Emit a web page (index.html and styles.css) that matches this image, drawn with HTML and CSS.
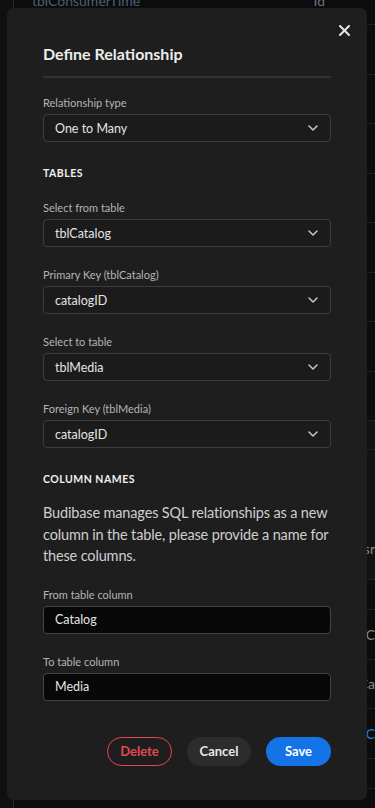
FILE: index.html
```html
<!DOCTYPE html>
<html lang="en">
<head>
    <meta charset="UTF-8">
    <meta name="viewport" content="width=device-width, initial-scale=1.0">
    <title>Define Relationship</title>
    <link rel="stylesheet" href="styles.css">
</head>
<body>

<div class="backdrop">
    <div class="side"></div>
    <div class="grid">
        <div class="row first"><span class="cell name">tblConsumerTime</span><span class="cell type">Id</span></div>
        <div class="row"></div>
        <div class="row"></div>
        <div class="row"></div>
        <div class="row"></div>
        <div class="row"></div>
        <div class="row"></div>
        <div class="row"></div>
        <div class="row"></div>
        <div class="row band"></div>
        <div class="row tall"><span class="cell frag">sr</span></div>
        <div class="row short"></div>
        <div class="row"><span class="cell frag">o C</span></div>
        <div class="row"><span class="cell frag">Ca</span></div>
        <div class="row"><span class="cell frag">o <b class="blue">C</b></span></div>
        <div class="row short"></div>
        <div class="row"></div>
    </div>
</div>

<div class="modal">
    <button class="close" aria-label="Close">
        <svg width="11" height="11" viewBox="0 0 11 11"><path d="M1 1 L10 10 M10 1 L1 10" stroke="#e6e6e6" stroke-width="2" stroke-linecap="round"/></svg>
    </button>

    <h2>Define Relationship</h2>
    <div class="divider"></div>

    <div class="field">
        <label>Relationship type</label>
        <div class="select">One to Many <span class="chev"></span></div>
    </div>

    <h4>TABLES</h4>

    <div class="field">
        <label>Select from table</label>
        <div class="select">tblCatalog <span class="chev"></span></div>
    </div>
    <div class="field">
        <label>Primary Key (tblCatalog)</label>
        <div class="select">catalogID <span class="chev"></span></div>
    </div>
    <div class="field">
        <label>Select to table</label>
        <div class="select">tblMedia <span class="chev"></span></div>
    </div>
    <div class="field">
        <label>Foreign Key (tblMedia)</label>
        <div class="select">catalogID <span class="chev"></span></div>
    </div>

    <h4 class="tight">COLUMN NAMES</h4>
    <p class="desc">Budibase manages SQL relationships as a new column in the table, please provide a name for these columns.</p>

    <div class="field">
        <label>From table column</label>
        <div class="input">Catalog</div>
    </div>
    <div class="field">
        <label>To table column</label>
        <div class="input">Media</div>
    </div>

    <div class="actions">
        <button class="btn delete">Delete</button>
        <button class="btn cancel">Cancel</button>
        <button class="btn save">Save</button>
    </div>
</div>

<script>
    // chevrons drawn once, same for every select
    document.querySelectorAll('.chev').forEach(function (el) {
        el.innerHTML = '<svg width="10" height="6" viewBox="0 0 10 6"><path d="M1 1 L5 5 L9 1" fill="none" stroke="#c8c8c8" stroke-width="1.5" stroke-linecap="round" stroke-linejoin="round"/></svg>';
    });
</script>

</body>
</html>
```

FILE: styles.css
```css
body {
    margin: 0;
    background: #0c0c0c;
    font-family: 'Lato', 'Noto Sans', sans-serif;
    height: 808px;
    overflow: hidden;
}
.backdrop {
    display: flex;
    height: 808px;
}
.side {
    width: 13px;
    background: #101010;
    border-right: 1px solid #2a2a2a;
}
.grid {
    flex: 1;
    margin-top: -24px;
}
.row {
    height: 49.5px;
    box-sizing: border-box;
    border-bottom: 1px solid #222;
    display: flex;
    align-items: center;
}
.row.first { height: 49px; align-items: flex-start; padding-top: 16px; }
.row.band { height: 29px; background: #131313; }
.row.tall { height: 130px; background: #131313; align-items: flex-end; padding-bottom: 22px; }
.row.short { height: 30px; }
.cell {
    font-size: 14px;
    color: #4e5c7a;
}
.name { margin-left: 18px; }
.type { margin-left: auto; margin-right: 50px; color: #6a6f86; }
.frag {
    margin-left: auto;
    color: #8a8a8a;
}
.blue { color: #2680eb; font-weight: normal; }

.modal {
    position: absolute;
    top: 8px;
    left: 7px;
    width: 360px;
    height: 792px;
    box-sizing: border-box;
    background: #1e1e1e;
    border-radius: 7px;
    padding: 36px 36px 0 36px;
}
.close {
    position: absolute;
    top: 17px;
    right: 17px;
    background: none;
    border: none;
    padding: 0;
    width: 11px;
    height: 11px;
    cursor: pointer;
}
.close svg { display: block; }
h2 {
    margin: 0;
    font-size: 16px;
    font-weight: bold;
    color: #ececec;
    line-height: 20px;
}
.divider {
    height: 2px;
    background: #333;
    margin: 12px 0 18px;
}
.field { margin-bottom: 21px; }
label {
    display: block;
    font-size: 11px;
    color: #b4b4b4;
    line-height: 14px;
    margin-bottom: 4px;
}
.select, .input {
    height: 28px;
    box-sizing: border-box;
    border: 1px solid #3d3d3d;
    border-radius: 4px;
    background: #1b1b1b;
    display: flex;
    align-items: center;
    padding: 0 11px;
    font-size: 12.5px;
    color: #e4e4e4;
}
.input { background: #080808; border-color: #444; }
.chev {
    margin-left: auto;
    display: flex;
    margin-right: 1px;
}
h4 {
    margin: 24px 0 21px;
    font-size: 10.5px;
    line-height: 14px;
    font-weight: bold;
    letter-spacing: 0.5px;
    color: #f0f0f0;
}
h4.tight { margin-bottom: 16px; }
.desc {
    margin: 0 0 21px;
    font-size: 14.5px;
    letter-spacing: -0.15px;
    line-height: 21.5px;
    color: #cfcfcf;
}
.actions {
    display: flex;
    justify-content: flex-end;
    gap: 15px;
    margin-top: 36px;
}
.btn {
    width: 65px;
    height: 29px;
    border-radius: 15px;
    font-family: inherit;
    font-size: 13px;
    font-weight: bold;
    padding: 0;
    cursor: pointer;
    border: none;
}
.delete {
    background: transparent;
    border: 1px solid #e34850;
    color: #e34850;
}
.cancel { background: #2c2c2c; color: #e8e8e8; width: 64px; }
.save { background: #1473e6; color: #fff; }
```
